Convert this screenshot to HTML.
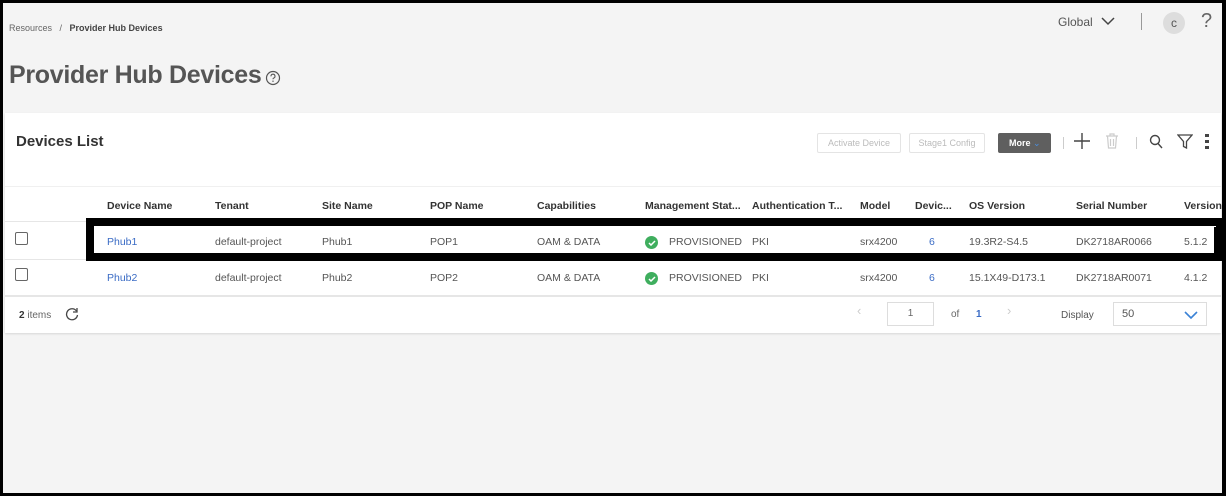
<!DOCTYPE html>
<html><head><style>
*{box-sizing:border-box;margin:0;padding:0}
body{width:1226px;height:496px;background:#000;font-family:"Liberation Sans",sans-serif;position:relative;overflow:hidden}
.page{position:absolute;left:3px;top:3px;width:1219px;height:490px;background:#f4f4f4}
.t{position:absolute;white-space:nowrap}
.card{position:absolute;left:2px;top:110px;width:1216px;height:220px;background:#fff;box-shadow:0 1px 2px rgba(0,0,0,.12)}
.hd{font-size:10.5px;font-weight:bold;color:#333;top:87px}
.c{font-size:10.5px;color:#555}
.lnk{color:#3b6cc5}
.btn{position:absolute;height:20px;border:1px solid #e4e4e4;border-radius:2px;font-size:9px;color:#bbb;line-height:18px;text-align:center}
.cb{position:absolute;width:13px;height:13px;border:1.5px solid #666;border-radius:2px}
.chk{position:absolute;width:13px;height:13px;border-radius:50%;background:#3fae5e}
</style></head><body>
<div class="page">
<div class="t" style="left:6px;top:20px;font-size:9px;color:#666">Resources &nbsp;&nbsp;/ &nbsp;&nbsp;<b style="color:#444">Provider Hub Devices</b></div>
<div class="t" style="left:6px;top:58px;font-size:25px;font-weight:bold;color:#555;letter-spacing:-0.3px">Provider Hub Devices</div>
<svg class="t" style="left:262px;top:67px" width="16" height="16" viewBox="0 0 16 16"><circle cx="8" cy="8" r="6.5" fill="none" stroke="#555" stroke-width="1.2"/><path d="M6 6.3a2 2 0 1 1 2.6 1.8c-.5.2-.6.5-.6 1.2" fill="none" stroke="#555" stroke-width="1.1"/><circle cx="8" cy="11.2" r=".7" fill="#555"/></svg>
<div class="t" style="left:1055px;top:12px;font-size:12px;color:#555">Global</div>
<svg class="t" style="left:1098px;top:13px" width="14" height="10"><path d="M1 2l6 6 6-6" fill="none" stroke="#444" stroke-width="1.5"/></svg>
<div class="t" style="left:1138px;top:10px;width:1px;height:17px;background:#999"></div>
<div class="t" style="left:1160px;top:9px;width:22px;height:22px;border-radius:50%;background:#ddd;font-size:12px;color:#555;text-align:center;line-height:22px">c</div>
<div class="t" style="left:1198px;top:7px;font-size:20px;color:#666">?</div>
<div class="card">
<div class="t" style="left:11px;top:20px;font-size:15px;font-weight:bold;color:#333">Devices List</div>
<div class="btn" style="left:812px;top:20px;width:84px">Activate Device</div>
<div class="btn" style="left:904px;top:20px;width:76px">Stage1 Config</div>
<div class="btn" style="left:993px;top:20px;width:53px;background:#5f5f5f;border-color:#5f5f5f;color:#fff;font-weight:bold;text-align:left;padding-left:10px">More <span style="color:#4a90e2;font-weight:normal">&#8964;</span></div>
<div class="t" style="left:1058px;top:24px;width:1px;height:12px;background:#ccc"></div>
<svg class="t" style="left:1069px;top:20px" width="16" height="16"><path d="M8 0v16M0 8h16" stroke="#444" stroke-width="1.4"/></svg>
<svg class="t" style="left:1100px;top:20px" width="14" height="16"><path d="M1 3h12M5 3V1h4v2M2.5 3l1 12h7l1-12M5.5 6v7M8.5 6v7" fill="none" stroke="#ccc" stroke-width="1.2"/></svg>
<div class="t" style="left:1131px;top:24px;width:1px;height:12px;background:#ccc"></div>
<svg class="t" style="left:1144px;top:21px" width="14" height="15"><circle cx="6" cy="6" r="4.5" fill="none" stroke="#444" stroke-width="1.4"/><path d="M9 9.5l4 4.5" stroke="#444" stroke-width="1.4"/></svg>
<svg class="t" style="left:1172px;top:21px" width="16" height="15"><path d="M1 1h14l-5.5 6.5V14l-3-1.5v-5z" fill="none" stroke="#444" stroke-width="1.3"/></svg>
<div class="t" style="left:1200px;top:21px;width:4px;height:15px;background:repeating-linear-gradient(#444 0 3px,transparent 3px 6px)"></div>
<div class="t" style="left:0;top:73px;width:1216px;height:36px;border-bottom:1px solid #e6e6e6"></div>
<div class="t" style="left:0;top:73px;width:1216px;height:1px;background:#f0f0f0"></div>
<div class="t hd" style="left:102px">Device Name</div>
<div class="t hd" style="left:210px">Tenant</div>
<div class="t hd" style="left:317px">Site Name</div>
<div class="t hd" style="left:425px">POP Name</div>
<div class="t hd" style="left:532px">Capabilities</div>
<div class="t hd" style="left:640px">Management Stat...</div>
<div class="t hd" style="left:747px">Authentication T...</div>
<div class="t hd" style="left:855px">Model</div>
<div class="t hd" style="left:910px">Devic...</div>
<div class="t hd" style="left:964px">OS Version</div>
<div class="t hd" style="left:1071px">Serial Number</div>
<div class="t hd" style="left:1179px">Version</div>
<div class="t" style="left:0;top:146px;width:1216px;height:1px;background:#e6e6e6"></div>
<div class="t" style="left:0;top:182px;width:1216px;height:2px;background:#e6e6e6"></div>
<div class="cb" style="left:10px;top:119px"></div>
<div class="cb" style="left:10px;top:155px"></div>
<div class="t c lnk" style="left:102px;top:123px">Phub1</div>
<div class="t c" style="left:210px;top:123px">default-project</div>
<div class="t c" style="left:317px;top:123px">Phub1</div>
<div class="t c" style="left:425px;top:123px">POP1</div>
<div class="t c" style="left:532px;top:123px">OAM &amp; DATA</div>
<div class="chk" style="left:640px;top:123px"></div><svg class="t" style="left:643px;top:127px" width="8" height="6"><path d="M1 3l2 2 4-4" fill="none" stroke="#fff" stroke-width="1.5"/></svg>
<div class="t c" style="left:664px;top:123px">PROVISIONED</div>
<div class="t c" style="left:747px;top:123px">PKI</div>
<div class="t c" style="left:855px;top:123px">srx4200</div>
<div class="t c lnk" style="left:924px;top:123px">6</div>
<div class="t c" style="left:964px;top:123px">19.3R2-S4.5</div>
<div class="t c" style="left:1071px;top:123px">DK2718AR0066</div>
<div class="t c" style="left:1179px;top:123px">5.1.2</div>
<div class="t c lnk" style="left:102px;top:159px">Phub2</div>
<div class="t c" style="left:210px;top:159px">default-project</div>
<div class="t c" style="left:317px;top:159px">Phub2</div>
<div class="t c" style="left:425px;top:159px">POP2</div>
<div class="t c" style="left:532px;top:159px">OAM &amp; DATA</div>
<div class="chk" style="left:640px;top:159px"></div><svg class="t" style="left:643px;top:163px" width="8" height="6"><path d="M1 3l2 2 4-4" fill="none" stroke="#fff" stroke-width="1.5"/></svg>
<div class="t c" style="left:664px;top:159px">PROVISIONED</div>
<div class="t c" style="left:747px;top:159px">PKI</div>
<div class="t c" style="left:855px;top:159px">srx4200</div>
<div class="t c lnk" style="left:924px;top:159px">6</div>
<div class="t c" style="left:964px;top:159px">15.1X49-D173.1</div>
<div class="t c" style="left:1071px;top:159px">DK2718AR0071</div>
<div class="t c" style="left:1179px;top:159px">4.1.2</div>
<div class="t" style="left:14px;top:197px;font-size:10px;color:#666"><b style="color:#333">2</b> items</div>
<svg class="t" style="left:60px;top:194px" width="14" height="14"><path d="M11.5 4A5.5 5.5 0 1 0 12.5 8" fill="none" stroke="#444" stroke-width="1.3"/><path d="M12 1v4H8" fill="none" stroke="#444" stroke-width="1.3"/></svg>
<div class="t" style="left:852px;top:190px;font-size:13px;color:#ccc">&#8249;</div>
<div class="t" style="left:882px;top:189px;width:47px;height:24px;border:1px solid #ddd;font-size:10px;color:#666;text-align:center;line-height:22px">1</div>
<div class="t" style="left:946px;top:196px;font-size:10px;color:#666">of</div>
<div class="t" style="left:971px;top:196px;font-size:10px;color:#3b6cc5;font-weight:bold">1</div>
<div class="t" style="left:1002px;top:190px;font-size:13px;color:#ccc">&#8250;</div>
<div class="t" style="left:1056px;top:197px;font-size:10px;color:#555">Display</div>
<div class="t" style="left:1108px;top:189px;width:94px;height:24px;border:1px solid #ddd;font-size:11px;color:#555;padding-left:8px;line-height:22px">50</div>
<svg class="t" style="left:1179px;top:198px" width="14" height="9"><path d="M1 1l6 6 6-6" fill="none" stroke="#3b82d6" stroke-width="1.6"/></svg>
</div>
</div>
<div style="position:absolute;left:86px;top:218px;width:1136px;height:43px;border:8px solid #000"></div>
<div style="position:absolute;left:94px;top:226px;width:1122px;height:1px;background:#fff"></div>
</body></html>
